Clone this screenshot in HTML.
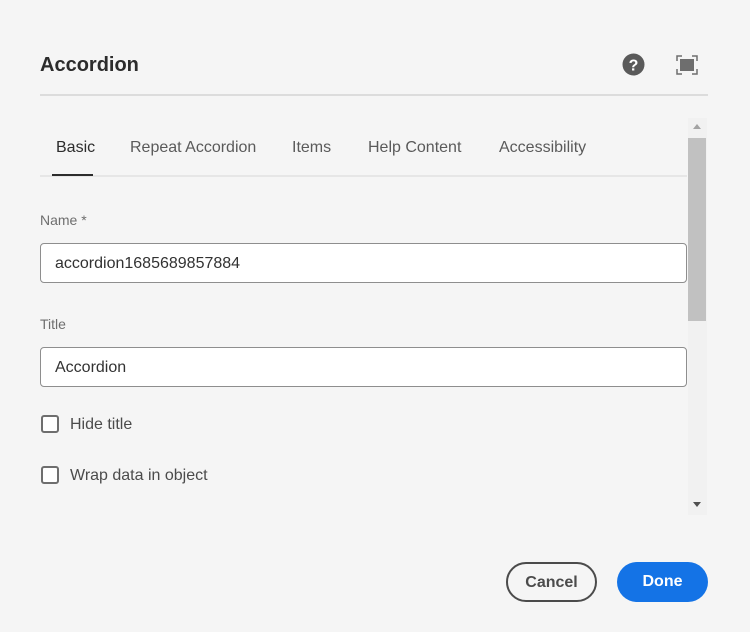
<!DOCTYPE html>
<html><head><style>
body{margin:0;width:750px;height:632px;background:#f5f5f5;font-family:"Liberation Sans",sans-serif;position:relative;overflow:hidden;color:#4b4b4b}
.a{position:absolute}
.tab{position:absolute;top:139px;font-size:16px;color:#5a5a5a}
.lbl{position:absolute;font-size:14px;color:#6e6e6e}
.inp{position:absolute;left:40px;width:647px;height:40px;border:1px solid #8e8e8e;border-radius:4px;background:#fff;box-sizing:border-box;font-size:16px;line-height:40px;padding-left:14px;color:#323232}
.cb{position:absolute;left:41px;width:14px;height:14px;border:2px solid #6e6e6e;border-radius:3px;background:#fff}
.cbl{position:absolute;left:70px;font-size:16px;color:#4b4b4b}
</style></head><body>
<div class="a" style="left:40px;top:54px;font-size:20px;font-weight:bold;color:#2c2c2c">Accordion</div>
<svg class="a" style="left:622px;top:53px" width="23" height="23"><circle cx="11.5" cy="11.5" r="11" fill="#5a5a5a"/><text x="11.5" y="17.5" text-anchor="middle" font-size="16" font-weight="bold" fill="#fff" font-family="Liberation Sans">?</text></svg>
<svg class="a" style="left:676px;top:55px" width="22" height="20" fill="none" stroke="#6e6e6e" stroke-width="1.5"><path d="M1 6V1h5M16 1h5v5M21 14v5h-5M6 19H1v-5"/><rect x="4" y="4" width="14" height="12" fill="#6e6e6e" stroke="none"/></svg>
<div class="a" style="left:40px;top:94px;width:668px;height:2px;background:#dcdcdc"></div>
<div class="tab" style="left:56px;color:#2c2c2c">Basic</div>
<div class="tab" style="left:130px">Repeat Accordion</div>
<div class="tab" style="left:292px">Items</div>
<div class="tab" style="left:368px">Help Content</div>
<div class="tab" style="left:499px">Accessibility</div>
<div class="a" style="left:40px;top:175px;width:647px;height:2px;background:#e6e6e6"></div>
<div class="a" style="left:52px;top:174px;width:41px;height:2px;background:#2c2c2c"></div>
<div class="lbl" style="left:40px;top:212px">Name *</div>
<div class="inp" style="top:243px">accordion1685689857884</div>
<div class="lbl" style="left:40px;top:316px">Title</div>
<div class="inp" style="top:347px">Accordion</div>
<div class="cb" style="top:415px"></div><div class="cbl" style="top:416px">Hide title</div>
<div class="cb" style="top:466px"></div><div class="cbl" style="top:467px">Wrap data in object</div>
<div class="a" style="left:688px;top:118px;width:19px;height:397px;background:#f1f1f1"></div>
<div class="a" style="left:688px;top:138px;width:18px;height:183px;background:#c1c1c1"></div>
<div class="a" style="left:693px;top:124px;width:0;height:0;border-left:4px solid transparent;border-right:4px solid transparent;border-bottom:5px solid #a3a3a3"></div>
<div class="a" style="left:693px;top:502px;width:0;height:0;border-left:4px solid transparent;border-right:4px solid transparent;border-top:5px solid #505050"></div>
<div class="a" style="left:506px;top:562px;width:91px;height:40px;border:2px solid #4b4b4b;border-radius:20px;box-sizing:border-box;text-align:center;line-height:38px;font-size:16px;font-weight:bold;color:#4b4b4b">Cancel</div>
<div class="a" style="left:617px;top:562px;width:91px;height:40px;background:#1473e6;border-radius:20px;text-align:center;line-height:40px;font-size:16px;font-weight:bold;color:#fff">Done</div>
</body></html>
